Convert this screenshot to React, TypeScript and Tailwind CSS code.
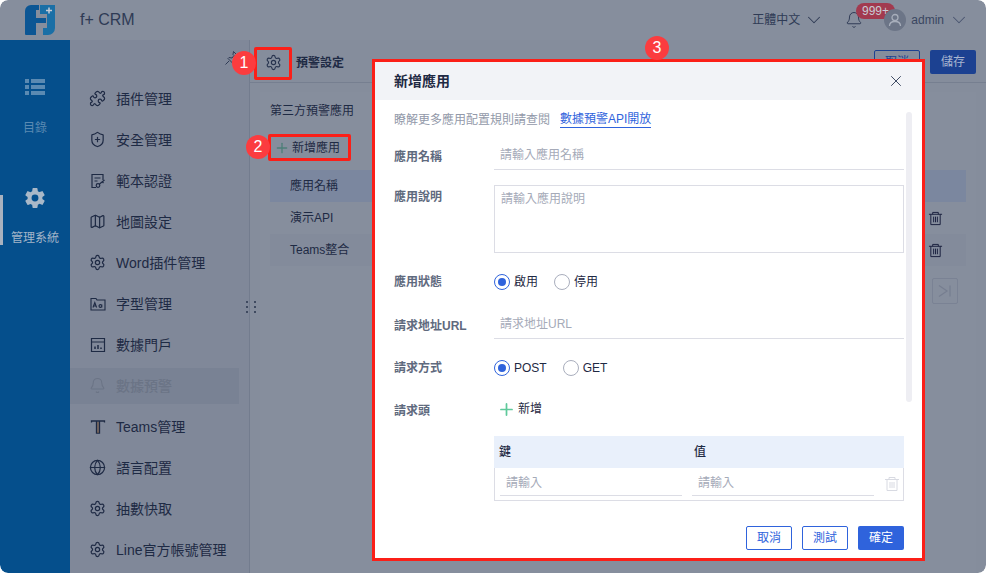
import { Bell, ChevronDown, Globe, Map, Plus, Puzzle, Settings, ShieldPlus, X } from 'lucide-react'
import { IoSettingsSharp } from 'react-icons/io5'

const font = 'font-["Liberation_Sans","Noto_Sans_CJK_TC",sans-serif]'

function TrashIcon({ className }: { className?: string }) {
  return (
    <svg viewBox="0 0 16 16" fill="none" stroke="currentColor" strokeWidth="1" className={className}>
      <path d="M1 3.500h14M5 3.500V1.500h6v2M3 3.500v11h10v-11M6 6v6M8 6v6M10 6v6" />
    </svg>
  )
}

function FileKeyIcon() {
  return (
    <svg viewBox="0 0 16 16" fill="none" stroke="currentColor" strokeWidth="1.200" className="h-[16px] w-[16px]">
      <path d="M6 14.500H2V1.500h11v5.500M4.500 5h6M4.500 8h3" />
      <circle cx="8" cy="12.500" r="1.800" />
      <path d="M9.500 11l5-4M12.500 9l1 1" />
    </svg>
  )
}

function FontIcon() {
  return (
    <svg viewBox="0 0 16 16" fill="none" stroke="currentColor" strokeWidth="1.100" className="h-[16px] w-[16px]">
      <path d="M1 2.500h5l1 1.500h8v10H1z" />
      <path d="M3 11.500l1.800-5 1.800 5M3.700 10h2.200M11.800 8.500v3M11.800 10c0-1.800-2.800-1.800-2.800 0s2.800 1.800 2.800 0" />
    </svg>
  )
}

function PortalIcon() {
  return (
    <svg viewBox="0 0 16 16" fill="none" stroke="currentColor" strokeWidth="1.200" className="h-[16px] w-[16px]">
      <path d="M1.500 1.500h13v13h-13zM1.500 5h13" />
      <path d="M5 12V9.500M8 12V8M11 12v-1.500" strokeWidth="1.500" />
    </svg>
  )
}

function TeamsIcon() {
  return (
    <svg viewBox="0 0 16 16" fill="none" className="h-[16px] w-[16px]">
      <path d="M1.500 3.500V2h13v1.500M6.500 2.500v11.500h3V2.500" stroke="currentColor" strokeWidth="1.300" />
      <path d="M8 3v11" stroke="#6e5a4e" strokeWidth="1.500" />
    </svg>
  )
}

function PinIcon() {
  return (
    <svg viewBox="0 0 16 16" fill="none" stroke="currentColor" strokeWidth="1" className="h-[16px] w-[16px]">
      <path d="M9.500 1.500l5 5-1.500 1-1-.500-2.500 2.500.500 3-1 1-5-5 1-1 3 .500L10 5.500 9 4.500zM5 11l-3.500 3.500" />
    </svg>
  )
}

function ListIcon() {
  return (
    <svg viewBox="0 0 20 16" fill="currentColor" className="h-[16px] w-[20px]">
      <rect x="0" y="0" width="4" height="4" />
      <rect x="6" y="0" width="14" height="4" />
      <rect x="0" y="6" width="4" height="4" />
      <rect x="6" y="6" width="14" height="4" />
      <rect x="0" y="12" width="4" height="4" />
      <rect x="6" y="12" width="14" height="4" />
    </svg>
  )
}

function Logo() {
  return (
    <svg viewBox="0 0 30 30" className="h-[30px] w-[30px]">
      <path d="M6 0h8v5h-3v25H1a1 1 0 0 1-1-1V6a6 6 0 0 1 6-6z" fill="#0c5694" />
      <path d="M11 13h10v5H11z" fill="#0c5694" />
      <path d="M15 0h15v23a7 7 0 0 1-7 7h-5V23h4V9h-7z" fill="#1a6fa6" />
      <path d="M24 2.500v6M21 5.500h6" stroke="#c5cbd5" strokeWidth="1.500" />
    </svg>
  )
}

const menu = [
  { name: '插件管理', icon: <Puzzle size={17} strokeWidth={1.7} /> },
  { name: '安全管理', icon: <ShieldPlus size={17} strokeWidth={1.7} /> },
  { name: '範本認證', icon: <FileKeyIcon /> },
  { name: '地圖設定', icon: <Map size={17} strokeWidth={1.7} /> },
  { name: 'Word插件管理', icon: <Settings size={17} strokeWidth={1.7} /> },
  { name: '字型管理', icon: <FontIcon /> },
  { name: '數據門戶', icon: <PortalIcon /> },
  { name: '數據預警', icon: <Bell size={17} strokeWidth={1.5} />, active: true },
  { name: 'Teams管理', icon: <TeamsIcon /> },
  { name: '語言配置', icon: <Globe size={17} strokeWidth={1.7} /> },
  { name: '抽數快取', icon: <Settings size={17} strokeWidth={1.7} /> },
  { name: 'Line官方帳號管理', icon: <Settings size={17} strokeWidth={1.7} /> },
]

function Badge({ n, className }: { n: number; className: string }) {
  return (
    <div className={`absolute z-30 flex h-[24px] w-[24px] items-center justify-center rounded-full bg-[#fb3c3f] text-[16px] font-medium text-white ${className}`}>
      {n}
    </div>
  )
}

function Radio({ label, checked }: { label: string; checked?: boolean }) {
  return (
    <div className="flex items-center gap-1">
      <span className={`flex h-4 w-4 items-center justify-center rounded-full border ${checked ? 'border-[#2f63dc]' : 'border-[#a9aebd]'}`}>
        {checked && <span className="h-2 w-2 rounded-full bg-[#2f63dc]" />}
      </span>
      <span className="text-xs text-[#1f2a44]">{label}</span>
    </div>
  )
}

function LineInput({ placeholder, className }: { placeholder: string; className?: string }) {
  return (
    <div className={`flex items-center border-b border-[#dcdde5] text-xs text-[#a5aab8] ${className ?? ''}`}>
      {placeholder}
    </div>
  )
}

function ModalForm() {
  return (
    <div className="h-full overflow-hidden pl-[19px] pr-[18px]">
      <div className="flex h-[38px] items-center pt-[1px] text-xs">
        <span className="text-[#9299a9]">瞭解更多應用配置規則請查閱</span>
        <span className="ml-[10px] border-b border-[#2f63dc] leading-[15px] text-[#2f63dc]">數據預警API開放</span>
      </div>

      <div className="flex h-[32px] items-start">
        <span className="mt-[11px] w-[100px] text-xs font-bold text-[#5f6a7e]">應用名稱</span>
        <LineInput placeholder="請輸入應用名稱" className="h-[32px] w-[410px] pl-[6px] pt-[2px]" />
      </div>

      <div className="mt-[15px] flex">
        <span className="mt-[4px] w-[100px] text-xs font-bold text-[#5f6a7e]">應用說明</span>
        <div className="h-[68px] w-[410px] border border-[#dcdde5] px-[6px] py-[5px] text-xs text-[#a5aab8]">請輸入應用說明</div>
      </div>

      <div className="mt-[13px] flex h-[32px] items-center">
        <span className="w-[100px] text-xs font-bold text-[#5f6a7e]">應用狀態</span>
        <div className="flex gap-4">
          <Radio label="啟用" checked />
          <Radio label="停用" />
        </div>
      </div>

      <div className="mt-[10px] flex h-[31px] items-start">
        <span className="mt-[10px] w-[100px] text-xs font-bold text-[#5f6a7e]">請求地址URL</span>
        <LineInput placeholder="請求地址URL" className="h-[31px] w-[410px] pl-[6px] pt-[1px]" />
      </div>

      <div className="mt-[13px] flex h-[32px] items-center">
        <span className="w-[100px] text-xs font-bold text-[#5f6a7e]">請求方式</span>
        <div className="flex gap-4">
          <Radio label="POST" checked />
          <Radio label="GET" />
        </div>
      </div>

      <div className="mt-[9px] flex h-[32px] items-center">
        <span className="mt-[3px] w-[100px] text-xs font-bold text-[#5f6a7e]">請求頭</span>
        <div className="flex items-center gap-[2px] pl-[3px] text-xs text-[#1f2a44]">
          <Plus size={19} strokeWidth={2.200} className="text-[#5fc99b]" />
          新增
        </div>
      </div>

      <div className="ml-[100px] mt-[11px] w-[410px]">
        <div className="flex h-[32px] items-center bg-[#e9f0fb] text-xs font-medium text-[#1f2a44]">
          <span className="w-[200px] pl-[5px]">鍵</span>
          <span>值</span>
        </div>
        <div className="flex h-[33px] items-start border border-t-0 border-[#dcdde5] pl-[5px] text-xs">
          <LineInput placeholder="請輸入" className="h-[28px] w-[182px] pl-[6px] pt-[2px]" />
          <LineInput placeholder="請輸入" className="ml-[10px] h-[28px] w-[182px] pl-[6px] pt-[2px]" />
          <TrashIcon className="ml-[10px] mt-[8px] h-[16px] w-[16px] text-[#d8dae2]" />
        </div>
      </div>
    </div>
  )
}

function Modal() {
  return (
    <div className="absolute left-[372px] top-[59px] z-20 flex h-[502px] w-[553px] flex-col border-[3px] border-[#fb1f18] bg-white">
      <div className="flex h-[38px] shrink-0 items-center justify-between bg-[#f2f3f7] pb-[1px] pl-[19px] pr-[17px]">
        <span className="text-sm font-bold text-[#1f2a44]">新增應用</span>
        <X size={18} strokeWidth={1.300} className="text-[#3a4660]" />
      </div>
      <div className="relative min-h-0 flex-1">
        <ModalForm />
        <div className="absolute left-[531px] top-[12px] h-[290px] w-[6px] rounded-full bg-[#eeeef3]" />
      </div>
      <div className="flex h-[36px] shrink-0 items-start justify-end gap-[10px] pr-[18px] pt-[4px] text-xs">
        <button className="h-[24px] w-[46px] rounded-[2px] border border-[#2f63dc] text-[#2f63dc]">取消</button>
        <button className="h-[24px] w-[46px] rounded-[2px] border border-[#2f63dc] text-[#2f63dc]">測試</button>
        <button className="h-[24px] w-[46px] rounded-[2px] bg-[#2f63dc] text-white">確定</button>
      </div>
    </div>
  )
}

function Rail() {
  return (
    <div className="flex w-[70px] shrink-0 flex-col bg-[#054f8c] text-xs">
      <div className="flex h-[100px] flex-col items-center pt-[39px] text-[#5b8ab2]">
        <ListIcon />
        <span className="mt-[25px]">目錄</span>
      </div>
      <div className="mt-[55px] flex h-[50px] flex-col items-center border-l-[3px] border-[#a9b2bf] pr-[3px]">
        <IoSettingsSharp size={22} className="-mt-[8px] shrink-0 text-[#a9b8c8]" />
        <span className="mt-[21px] text-[#a3b5c8]">管理系統</span>
      </div>
    </div>
  )
}

function Sidebar() {
  return (
    <div className="w-[180px] shrink-0 border-r border-[#737c8e] bg-[#808899] pt-[38px]">
      {menu.map(item => (
        <div key={item.name} className="flex h-[41px] items-center">
          <div className={`flex h-[36px] w-[169px] items-center gap-[10px] pl-[19px] text-sm ${item.active ? 'bg-[#798294] font-medium text-[#6b7486]' : 'text-[#1e2a44]'}`}>
            <span className="flex w-[17px] justify-center">{item.icon}</span>
            <span>{item.name}</span>
          </div>
        </div>
      ))}
    </div>
  )
}

function MainPanel() {
  return (
    <div className="flex min-w-0 flex-1 flex-col bg-[#858d9c]">
      <div className="flex h-[43px] shrink-0 items-center justify-between border-b border-[#767f90] pl-[15px] pr-[10px] pt-[2px]">
        <div className="flex items-center gap-[14px]">
          <Settings size={17} strokeWidth={1.600} className="text-[#27334e]" />
          <span className="mt-[2px] text-xs font-bold text-[#1e2a44]">預警設定</span>
        </div>
        <div className="flex gap-[10px] text-xs">
          <button className="h-[24px] w-[46px] rounded-[2px] border border-[#1c4191] text-[#1c4191]">取消</button>
          <button className="h-[24px] w-[46px] rounded-[2px] bg-[#1c4191] text-[#a9b6d0]">儲存</button>
        </div>
      </div>
      <div className="mx-[10px] mt-[9px] flex-1 bg-[#868e9d] px-[10px]">
        <div className="flex h-[38px] items-center text-xs text-[#1e2a44]">第三方預警應用</div>
        <div className="mt-[5px] flex h-[26px] items-center gap-[2px] pl-[4px] text-xs text-[#1e2a44]">
          <Plus size={16} strokeWidth={2} className="text-[#4d7f78]" />
          新增應用
        </div>
        <div className="mt-[9px] text-xs text-[#1e2a44]">
          <div className="flex h-[32px] items-center bg-[#7b879f] pl-[20px]">應用名稱</div>
          <div className="flex h-[32px] items-center justify-between pl-[20px] pr-[23px]">
            演示API
            <TrashIcon className="h-[15px] w-[15px] text-[#161d3c]" />
          </div>
          <div className="flex h-[32px] items-center justify-between bg-[#838b9b] pl-[20px] pr-[23px]">
            Teams整合
            <TrashIcon className="h-[15px] w-[15px] text-[#161d3c]" />
          </div>
        </div>
        <div className="mr-[8px] mt-[12px] flex justify-end">
          <div className="flex h-[26px] w-[26px] items-center justify-center rounded-[2px] border border-[#7a8294] text-[#767e90]">
            <svg viewBox="0 0 16 16" fill="none" stroke="currentColor" strokeWidth="1.200" className="h-[16px] w-[16px]">
              <path d="M2 2.500L10 8l-8 5.500M13 2.500v11" />
            </svg>
          </div>
        </div>
      </div>
    </div>
  )
}

export default function App() {
  return (
    <div className={`${font} relative h-[573px] w-[986px] overflow-hidden rounded-[8px] bg-white`}>
      <div className="flex h-full flex-col overflow-hidden rounded-[8px]">
        <header className="flex h-[40px] shrink-0 items-center bg-[#868e9d]">
          <div className="ml-[25px]"><Logo /></div>
          <span className="ml-[25px] text-base text-[#2f3b55]">f+ CRM</span>
          <div className="ml-auto flex items-center pr-[16px] text-xs text-[#2f3b55]">
            <span>正體中文</span>
            <ChevronDown size={22} strokeWidth={1.100} className="ml-[3px]" />
            <div className="ml-[20px] w-[39px]">
              <Bell size={18} strokeWidth={1.300} />
            </div>
            <div className="relative z-[1] flex h-[22px] w-[22px] items-center justify-center rounded-full bg-[#6c7587] text-[#a7aebb]">
              <svg viewBox="0 0 16 16" fill="none" stroke="currentColor" strokeWidth="1.300" className="h-[16px] w-[16px]">
                <circle cx="8" cy="5.500" r="3" />
                <path d="M2.500 14c0-3 2.500-4.500 5.500-4.500s5.500 1.500 5.500 4.500" />
              </svg>
            </div>
            <span className="ml-[5px] text-[#3a4660]">admin</span>
            <ChevronDown size={22} strokeWidth={1.100} className="ml-[4px] text-[#4a5570]" />
          </div>
        </header>
        <div className="flex min-h-0 flex-1">
          <Rail />
          <Sidebar />
          <MainPanel />
        </div>
      </div>

      {/* header badge and grip sit over the panels */}
      <div className="absolute left-[856px] top-[3px] rounded-full bg-[#a23a4f] px-[6px] text-xs leading-[16px] text-[#c9ccd4]">999+</div>
      <div className="absolute left-[246px] top-[301px] grid grid-cols-2 gap-x-[6px] gap-y-[3px]">
        {[0, 1, 2, 3, 4, 5].map(i => <span key={i} className="h-[2px] w-[2px] bg-[#3f4a60]" />)}
      </div>
      <div className="absolute left-[224px] top-[50px] text-[#2f3b55]"><PinIcon /></div>

      {/* annotation boxes */}
      <div className="absolute left-[254px] top-[47px] z-10 h-[33px] w-[38px] rounded-[2px] border-[3px] border-[#fb1f18]" />
      <div className="absolute left-[268px] top-[134px] z-10 h-[27px] w-[83px] rounded-[2px] border-[3px] border-[#fb1f18]" />
      <Badge n={1} className="left-[232px] top-[51px]" />
      <Badge n={2} className="left-[246px] top-[135px]" />
      <Badge n={3} className="left-[645px] top-[36px]" />

      <Modal />
    </div>
  )
}
